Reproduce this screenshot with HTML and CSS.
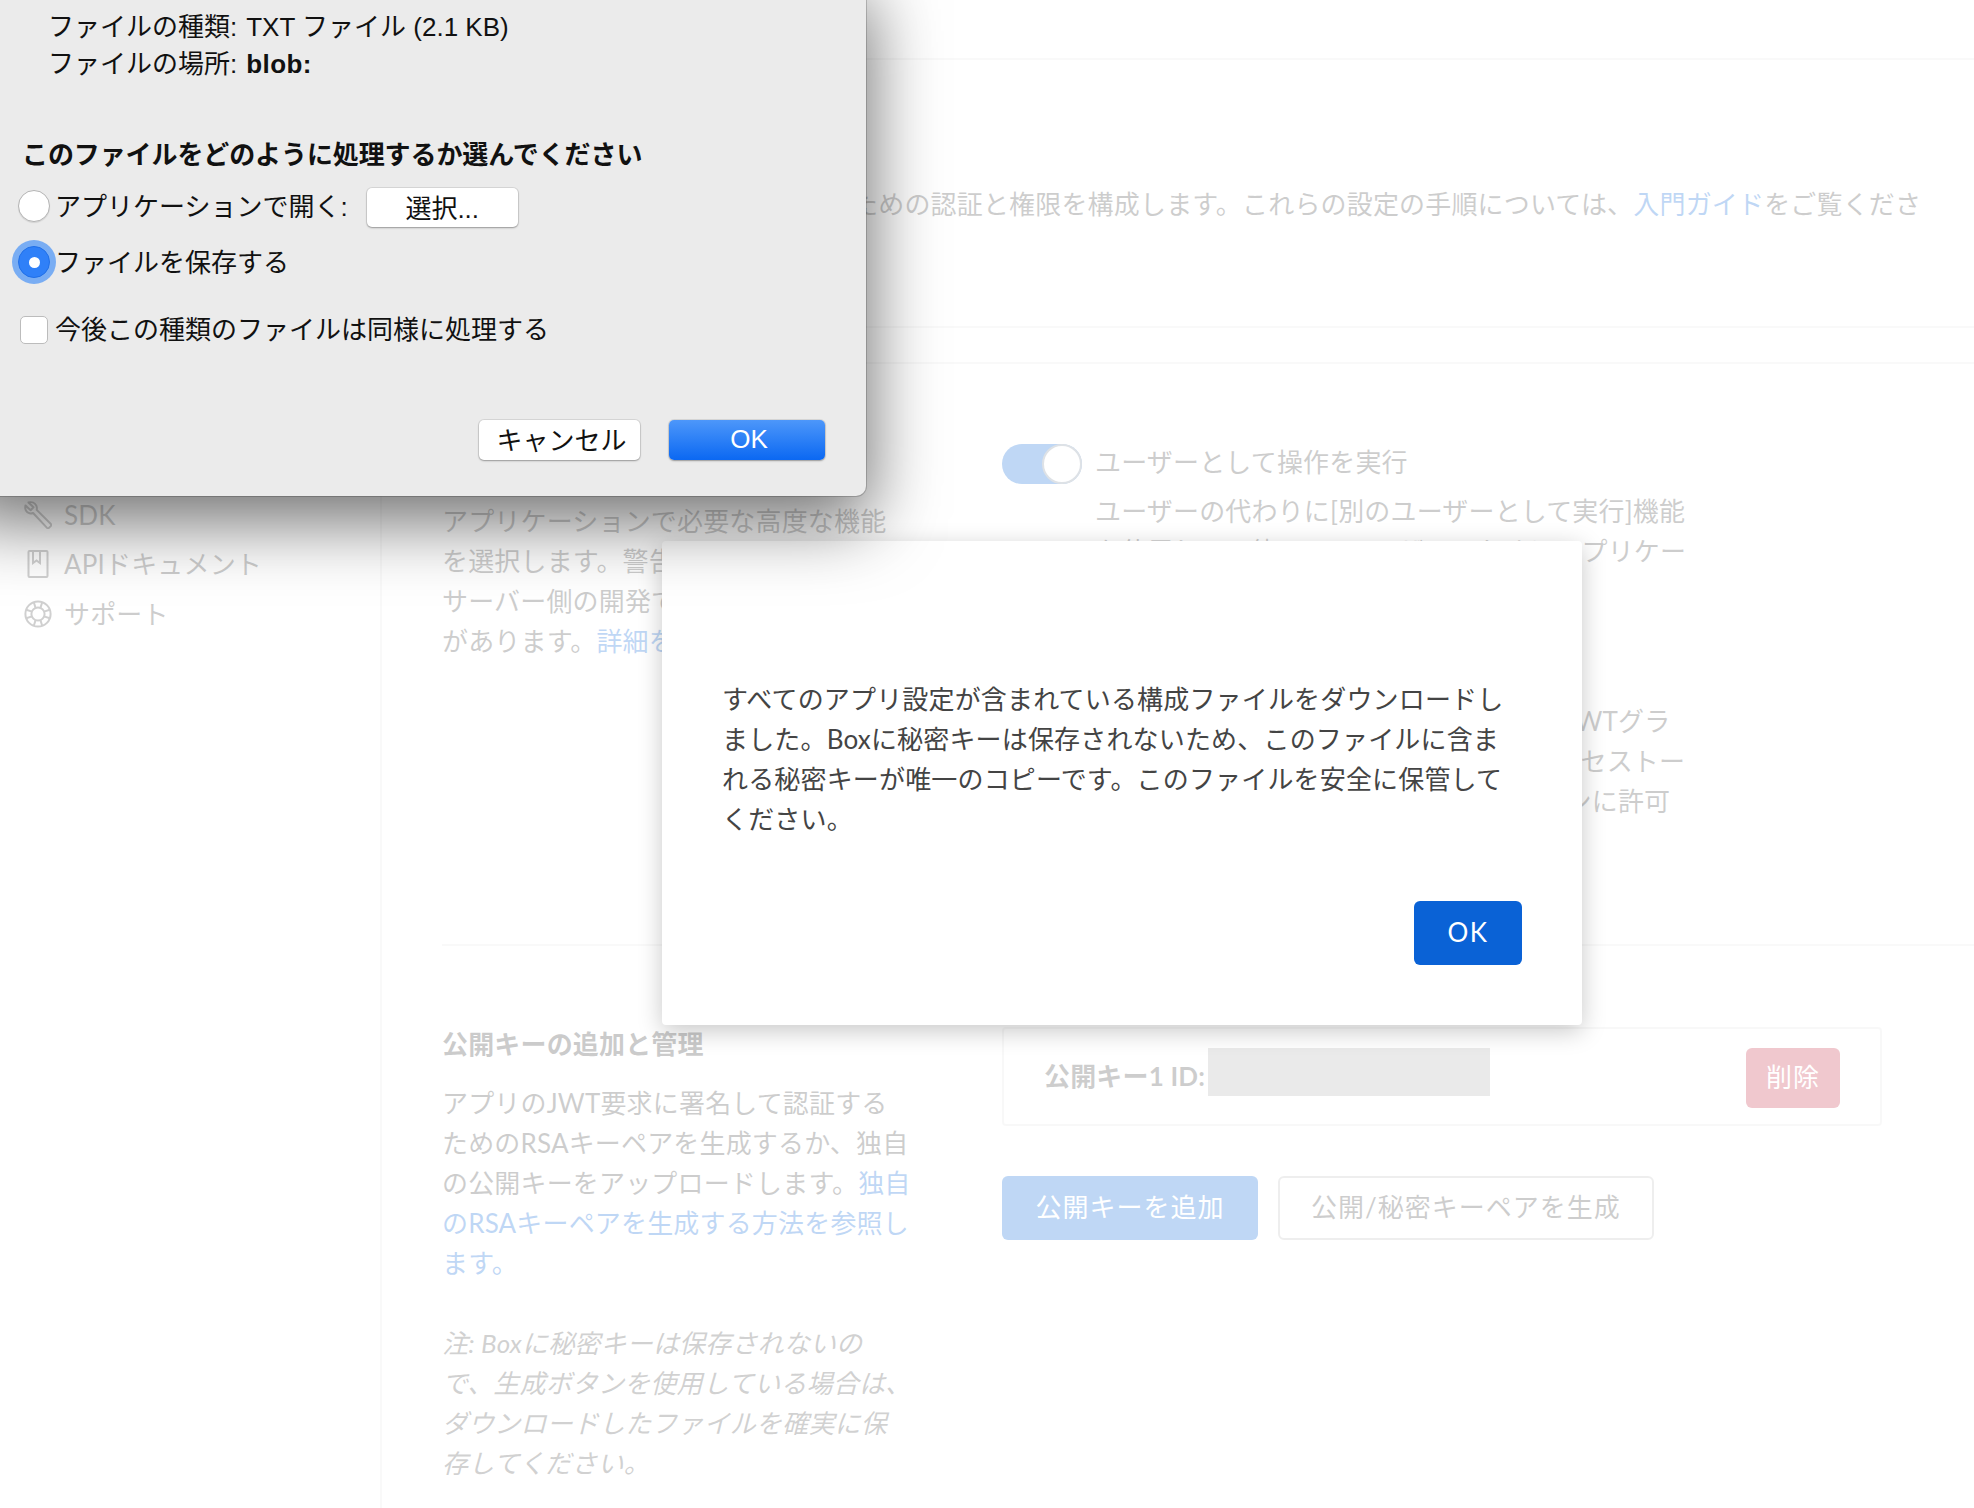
FILE: index.html
```html
<!DOCTYPE html>
<html lang="ja">
<head>
<meta charset="utf-8">
<title>アプリ設定</title>
<link rel="stylesheet" href="styles.css">
</head>
<body>
<div class="desktop">
  <div class="page">
    <aside class="sidebar">
      <a class="nav-item">
        <svg class="nav-icon" viewBox="0 0 28 28" fill="none" stroke="currentColor" stroke-width="2" stroke-linejoin="round"><path d="M4.5 1.5 9.5 6.3 6.6 9.3 1.5 4.5C.6 8.3 2.2 11.6 5.5 12.3 6.8 12.6 8 12.4 9.1 12L22.8 26.6C23.5 27.3 24.5 27.3 25.2 26.6L26.7 25.1C27.3 24.4 27.3 23.5 26.6 22.8L12.7 8.9C13 7.6 12.9 6 12.3 4.7 11 2 7.7.4 4.5 1.5Z"/></svg>
        <span>SDK</span>
      </a>
      <a class="nav-item">
        <svg class="nav-icon" viewBox="0 0 28 28" fill="none" stroke="currentColor" stroke-width="2"><rect x="4.5" y="1" width="19" height="26" rx="1"/><path d="M9 1.5V13L12.5 10.4 16 13V1.5"/></svg>
        <span>APIドキュメント</span>
      </a>
      <a class="nav-item">
        <svg class="nav-icon" viewBox="0 0 28 28" fill="none" stroke="currentColor" stroke-width="2"><circle cx="14" cy="14" r="12.6"/><circle cx="14" cy="14" r="6.6"/><path d="M9.8 2.2 11.6 8M18.2 2.2 16.4 8M25.8 9.8 20 11.6M25.8 18.2 20 16.4M18.2 25.8 16.4 20M9.8 25.8 11.6 20M2.2 18.2 8 16.4M2.2 9.8 8 11.6"/></svg>
        <span>サポート</span>
      </a>
    </aside>
    <main class="main">
      <div class="top-strip"></div>
      <section class="intro">
        <p>アプリケーションがBoxを使用するための認証と権限を構成します。これらの設定の手順については、<a class="link">入門ガイド</a>をご覧ください。</p>
      </section>
      <div class="tabs-strip"></div>
      <section class="split features">
        <div class="left-col">
          <h3 class="heading">高度な機能</h3>
          <p>アプリケーションで必要な高度な機能<br>を選択します。警告: これらの機能には<br>サーバー側の開発で追加の設定が必要<br>があります。<a class="link">詳細を確認</a>してください。</p>
        </div>
        <div class="right-col">
          <div class="toggle-row">
            <span class="toggle"><span class="toggle-knob"></span></span>
            <span class="toggle-label">ユーザーとして操作を実行</span>
          </div>
          <p class="toggle-desc">ユーザーの代わりに[別のユーザーとして実行]機能<br>を使用して、他のBoxユーザーのためにアプリケー<br>ションでAPIを呼び出すことができます。</p>
          <p class="toggle-desc second">このアプリケーションに、各ユーザーのJWTグラ<br>ントリクエストによるBoxのユーザーアクセストー<br>クンの取得と更新をこのアプリケーションに許可</p>
        </div>
      </section>
      <section class="split keys">
        <div class="left-col">
          <h3 class="heading">公開キーの追加と管理</h3>
          <p>アプリのJWT要求に署名して認証する<br>ためのRSAキーペアを生成するか、独自<br>の公開キーをアップロードします。<a class="link">独自<br>のRSAキーペアを生成する方法を参照し<br>ます。</a></p>
          <p class="note">注: Boxに秘密キーは保存されないの<br>で、生成ボタンを使用している場合は、<br>ダウンロードしたファイルを確実に保<br>存してください。</p>
        </div>
        <div class="right-col">
          <div class="key-card">
            <span class="key-label">公開キー1 ID:</span>
            <span class="redacted"></span>
            <button class="btn btn-danger">削除</button>
          </div>
          <div class="key-actions">
            <button class="btn btn-primary">公開キーを追加</button>
            <button class="btn btn-outline">公開/秘密キーペアを生成</button>
          </div>
        </div>
      </section>
    </main>
  </div>
  <div class="scrim"></div>

  <div class="modal">
    <p class="modal-text">すべてのアプリ設定が含まれている構成ファイルをダウンロードしました。Boxに秘密キーは保存されないため、このファイルに含まれる秘密キーが唯一のコピーです。このファイルを安全に保管してください。</p>
    <div class="modal-actions"><button class="btn modal-ok">OK</button></div>
  </div>

  <div class="mac-dialog">
    <div class="file-info">
      <div class="info-line"><span>ファイルの種類:</span><span>TXT ファイル (2.1 KB)</span></div>
      <div class="info-line"><span>ファイルの場所:</span><b>blob:</b></div>
    </div>
    <div class="mac-heading">このファイルをどのように処理するか選んでください</div>
    <div class="mac-row row-open">
      <span class="radio"></span>
      <span>アプリケーションで開く:</span>
      <button class="mac-btn choose">選択...</button>
    </div>
    <div class="mac-row row-save">
      <span class="radio radio-on"></span>
      <span>ファイルを保存する</span>
    </div>
    <div class="mac-row row-check">
      <span class="checkbox"></span>
      <span>今後この種類のファイルは同様に処理する</span>
    </div>
    <div class="mac-actions">
      <button class="mac-btn cancel">キャンセル</button>
      <button class="mac-btn mac-ok">OK</button>
    </div>
  </div>
</div>
</body>
</html>
```
FILE: styles.css
```css
* { box-sizing: border-box; }
html, body { margin: 0; padding: 0; }
body {
  font-family: Lato, "Noto Sans CJK JP", sans-serif;
  font-size: 26px;
  line-height: 40px;
  letter-spacing: .17px;
  color: #3a3a3a;
  background: #fff;
}
p { margin: 0; }
h3 { margin: 0; }
button { font-family: inherit; cursor: default; }

.desktop { position: relative; width: 1974px; height: 1508px; overflow: hidden; }
.page { display: flex; height: 100%; }

/* sidebar */
.sidebar { width: 382px; flex: none; padding-top: 490px; border-right: 2px solid #e8e8e8; }
.nav-item { display: flex; align-items: center; gap: 12px; height: 49.5px; padding-left: 24px; }
.nav-icon { width: 28px; height: 28px; flex: none; color: #444; }

/* main */
.main { flex: 1; min-width: 0; }
.top-strip { height: 60px; border-bottom: 2px solid #e8e8e8; }
.intro { height: 268px; padding: 124px 40px 0 60px; border-bottom: 2px solid #e8e8e8; }
.tabs-strip { height: 36px; border-bottom: 2px solid #e8e8e8; }
.link { color: #0061d5; }
.split { display: flex; margin-left: 60px; }
.left-col { width: 560px; flex: none; }
.right-col { flex: 1; min-width: 0; }
.heading { font-size: 26px; font-weight: 700; line-height: 40px; margin-bottom: 17px; color: #333; }

.features { height: 582px; padding-top: 80px; border-bottom: 2px solid #e8e8e8; }
.toggle-row { display: flex; align-items: flex-start; gap: 13px; height: 47px; }
.toggle { display: block; position: relative; width: 80px; height: 40px; border-radius: 20px; background: #0061d5; }
.toggle-knob { position: absolute; right: 0; top: 0; width: 40px; height: 40px; border-radius: 50%; background: #fff; border: 2px solid #7c8a9c; }
.toggle-label { line-height: 36px; font-weight: 400; }
.toggle-desc { margin-left: 93px; }
.toggle-desc.second { margin-top: 90px; }

.keys { padding-top: 78px; }
.keys .heading { margin-bottom: 19px; }
.note { margin-top: 40px; font-style: italic; color: #4a4a4a; }
.keys .right-col { padding-top: 3px; }
.key-card { display: flex; align-items: flex-start; width: 880px; height: 99px; padding: 19px 40px 0; border: 2px solid #e4e4e4; border-radius: 4px; }
.key-label { margin-top: 8px; font-weight: 700; }
.redacted { width: 282px; height: 48px; margin-left: 3px; background: #ababab; }
.btn { height: 64px; border-radius: 6px; border: 0; font-size: 26px; letter-spacing: 1px; line-height: 1; padding: 0 0 3px; white-space: nowrap; }
.btn-danger { margin-left: auto; height: 60px; width: 94px; background: #c3243c; color: #fff; }
.key-actions { display: flex; gap: 20px; margin-top: 50px; }
.btn-primary { width: 256px; background: #0061d5; color: #fff; }
.btn-outline { width: 376px; background: #fff; color: #3a3a3a; border: 2px solid #bbb; }

.scrim { position: absolute; inset: 0; background: rgba(255, 255, 255, .75); }

/* modal */
.modal { position: absolute; left: 662px; top: 541px; width: 920px; height: 484px; padding: 138px 60px 0 60px; background: #fff; border-radius: 4px; box-shadow: 0 6px 24px rgba(0, 0, 0, .22); }
.modal-text { color: #444; max-width: 790px; }
.modal-actions { display: flex; justify-content: flex-end; margin-top: 62px; }
.modal-ok { width: 108px; padding: 0 0 2px; letter-spacing: 1.5px; background: #0a62d6; color: #fff; }

/* native dialog */
.mac-dialog { position: absolute; left: -40px; top: -20px; width: 906px; height: 516px; display: flex; flex-direction: column; padding: 29px 41px 36px 40px; background: #ebebeb; border-radius: 0 0 10px 10px; box-shadow: 0 0 0 1px rgba(0, 0, 0, .18), 0 22px 70px 4px rgba(0, 0, 0, .56); font-family: "Liberation Sans", "Noto Sans CJK JP", sans-serif; font-size: 26px; letter-spacing: 0; color: #111; }
.file-info { padding-left: 48px; line-height: 37px; }
.info-line { display: flex; gap: 9px; }
.info-line b { letter-spacing: .4px; }
.mac-heading { margin: 52px 0 0 22px; font-weight: 700; line-height: 40px; letter-spacing: -.1px; }
.mac-row { display: flex; align-items: center; gap: 5px; padding-left: 18px; height: 40px; }
.row-open { margin-top: 12px; }
.row-save { margin-top: 16px; }
.row-check { margin-top: 27px; padding-left: 20px; gap: 7px; }
.radio { width: 32px; height: 32px; flex: none; margin-top: -2px; border-radius: 50%; background: #fff; border: 1px solid #b4b4b4; box-shadow: 0 1px 1px rgba(0, 0, 0, .1); position: relative; }
.radio-on { background: #2f80f8; border-color: #1f6fe8; box-shadow: 0 0 0 6px #79adf3; }
.radio-on::after { content: ""; position: absolute; left: 10px; top: 10px; width: 11px; height: 11px; border-radius: 50%; background: #fff; }
.checkbox { width: 28px; height: 28px; flex: none; border-radius: 5px; background: #fff; border: 1px solid #bcbcbc; }
.mac-btn { height: 40px; border: 0; border-radius: 5px; background: #fff; box-shadow: 0 0 0 1px rgba(0, 0, 0, .08), 0 1px 2px rgba(0, 0, 0, .3); font-size: 26px; color: #111; padding: 0 0 3px; font-family: "Liberation Sans", "Noto Sans CJK JP", sans-serif; }
.choose { width: 151px; height: 39px; margin-left: 14px; }
.mac-actions { display: flex; justify-content: flex-end; gap: 29px; margin-top: auto; }
.cancel { width: 161px; padding-left: 4px; }
.mac-ok { width: 156px; padding: 0 0 1px 4px; color: #fff; font-weight: 500; background: linear-gradient(#4d97fa, #0b68f2); }
```
